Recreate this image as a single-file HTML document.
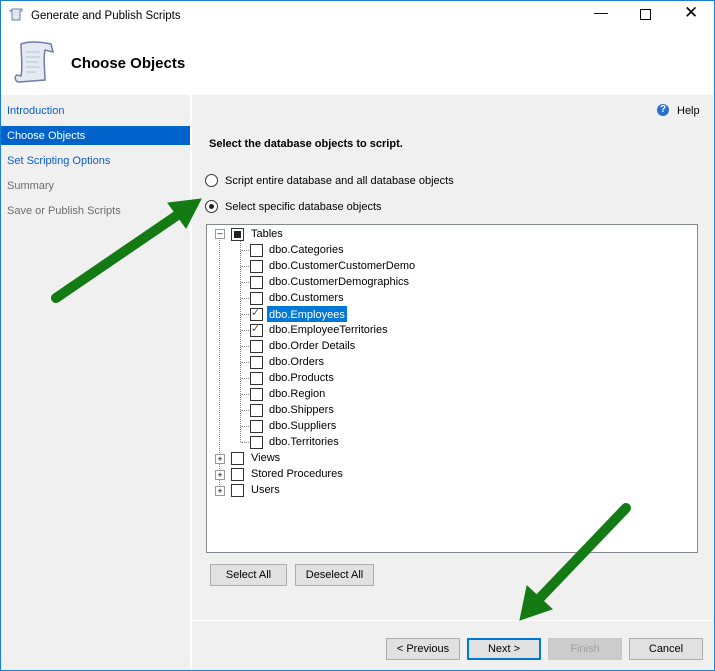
<!DOCTYPE html><html><head><style>
body{margin:0;width:715px;height:671px;position:relative;overflow:hidden;font-family:"Liberation Sans",sans-serif;font-size:11px;background:#fff}
.a{position:absolute}
.nav{position:absolute;left:7px;font-size:11px;color:#0a5ccc}
.btn{position:absolute;height:20px;border:1px solid #adadad;background:#e1e1e1;text-align:center;line-height:21px;font-size:11px;color:#000}
.row{position:absolute;left:269px;font-size:11px;line-height:17px;color:#000}
.cb{position:absolute;width:11px;height:11px;border:1px solid #333;background:#fff}
.dl{position:absolute;border-top:1px dotted #888;width:10px}
</style></head><body>
<div class="a" style="left:0;top:0;width:713px;height:669px;border:1px solid #1a7fd4"></div>
<svg class="a" style="left:9px;top:7px" width="16" height="16"><path d="M3 2h10v2h-2v9H3V4h-2z" fill="#dfe6f0" stroke="#6a7fa0"/></svg>
<div class="a" style="left:31px;top:10px;font-size:11.5px">Generate and Publish Scripts</div>
<div class="a" style="left:594px;top:4px;font-size:14px">&#8212;</div>
<div class="a" style="left:640px;top:9px;width:9px;height:9px;border:1px solid #000"></div>
<div class="a" style="left:684px;top:3px;font-size:17px">&#10005;</div>
<svg class="a" style="left:11px;top:40px" width="44" height="46"><path d="M10 4 C18 1 30 2 40 4 L42 12 L34 10 C32 20 34 30 34 40 L8 42 C4 42 3 36 6 35 L10 36 C12 28 10 14 10 4Z" fill="#e4e9f2" stroke="#6d7ea8" stroke-width="1.5"/><path d="M15 12h14M15 17h14M15 22h12M15 27h14M15 32h10" stroke="#b8c2d6"/></svg>
<div class="a" style="left:71px;top:55px;font-size:15px;font-weight:bold">Choose Objects</div>
<div class="a" style="left:1px;top:95px;width:189px;height:575px;background:#f0f0f0"></div>
<div class="a" style="left:190px;top:95px;width:2px;height:575px;background:#fff"></div>
<div class="a" style="left:192px;top:95px;width:521px;height:575px;background:#f0f0f0"></div>
<div class="nav" style="top:105px">Introduction</div>
<div class="a" style="left:1px;top:126px;width:189px;height:19px;background:#0063cc"></div>
<div class="nav" style="top:130px;color:#fff">Choose Objects</div>
<div class="nav" style="top:155px">Set Scripting Options</div>
<div class="nav" style="top:180px;color:#6d6d6d">Summary</div>
<div class="nav" style="top:205px;color:#6d6d6d">Save or Publish Scripts</div>
<div class="a" style="left:657px;top:104px;width:12px;height:12px;border-radius:50%;background:#2a6fc9;color:#fff;font-size:10px;font-weight:bold;text-align:center;line-height:12px">?</div>
<div class="a" style="left:677px;top:105px">Help</div>
<div class="a" style="left:209px;top:138px;font-weight:bold">Select the database objects to script.</div>
<div class="a" style="left:205px;top:174px;width:11px;height:11px;border:1px solid #333;border-radius:50%;background:#fff"></div>
<div class="a" style="left:225px;top:175px">Script entire database and all database objects</div>
<div class="a" style="left:205px;top:200px;width:11px;height:11px;border:1px solid #333;border-radius:50%;background:#fff"></div>
<div class="a" style="left:209px;top:204px;width:5px;height:5px;border-radius:50%;background:#222"></div>
<div class="a" style="left:225px;top:201px">Select specific database objects</div>
<div class="a" style="left:206px;top:224px;width:490px;height:327px;border:1px solid #828790;background:#fff"></div>
<div class="a" style="left:240px;top:240px;height:202px;border-left:1px dotted #888"></div>
<div class="a" style="left:219px;top:240px;height:251px;border-left:1px dotted #888"></div>
<div class="a" style="left:215px;top:229px;width:8px;height:8px;border:1px solid #999;background:#fff;font-size:9px;line-height:7px;text-align:center">&#8211;</div>
<div class="cb" style="left:231px;top:228px"></div><div class="a" style="left:234px;top:231px;width:7px;height:7px;background:#222"></div>
<div class="row" style="left:251px;top:226px">Tables</div>
<div id="rows"></div>
<script>
var n=["dbo.Categories","dbo.CustomerCustomerDemo","dbo.CustomerDemographics","dbo.Customers","dbo.Employees","dbo.EmployeeTerritories","dbo.Order Details","dbo.Orders","dbo.Products","dbo.Region","dbo.Shippers","dbo.Suppliers","dbo.Territories"];
var h="";n.forEach(function(t,i){var y=242+i*16;
h+='<div class="dl" style="left:241px;top:'+(y+8)+'px"></div><div class="cb" style="left:250px;top:'+(y+2)+'px">'+(i==4||i==5?'<span style="position:absolute;left:0;top:-3px;font-size:11px;color:#555">&#10003;</span>':'')+'</div>';
h+='<div class="row" style="top:'+y+'px;'+(i==4?'background:#0078d7;color:#fff;padding:0 2px;left:267px;line-height:16px;height:16px;padding-top:1px;height:15px':'')+'">'+t+'</div>';});
["Views","Stored Procedures","Users"].forEach(function(t,i){var y=450+i*16;
h+='<div class="a" style="left:215px;top:'+(y+4)+'px;width:8px;height:8px;border:1px solid #999;background:#fff;font-size:9px;line-height:8px;text-align:center">+</div><div class="cb" style="left:231px;top:'+(y+2)+'px"></div><div class="row" style="left:251px;top:'+y+'px">'+t+'</div>';});
document.getElementById("rows").innerHTML=h;
</script>
<div class="btn" style="left:210px;top:564px;width:75px">Select All</div>
<div class="btn" style="left:295px;top:564px;width:77px">Deselect All</div>
<div class="a" style="left:192px;top:620px;width:521px;height:1px;background:#fff"></div>
<div class="btn" style="left:386px;top:638px;width:72px">&lt; Previous</div>
<div class="btn" style="left:467px;top:638px;width:70px;border:2px solid #0078d7;height:18px;line-height:19px">Next &gt;</div>
<div class="btn" style="left:548px;top:638px;width:72px;color:#a0a0a0;border-color:#c8c8c8;background:#cccccc">Finish</div>
<div class="btn" style="left:629px;top:638px;width:72px">Cancel</div>
<svg class="a" style="left:0;top:0" width="715" height="671">
<g stroke="#147a14" fill="#147a14" stroke-linecap="round">
<line x1="56" y1="298" x2="182" y2="212" stroke-width="10"/><polygon points="201,199 168,203 186,228"/>
<line x1="626" y1="508" x2="538" y2="600" stroke-width="10"/><polygon points="520,620 527,586 552,609"/>
</g></svg>
</body></html>
